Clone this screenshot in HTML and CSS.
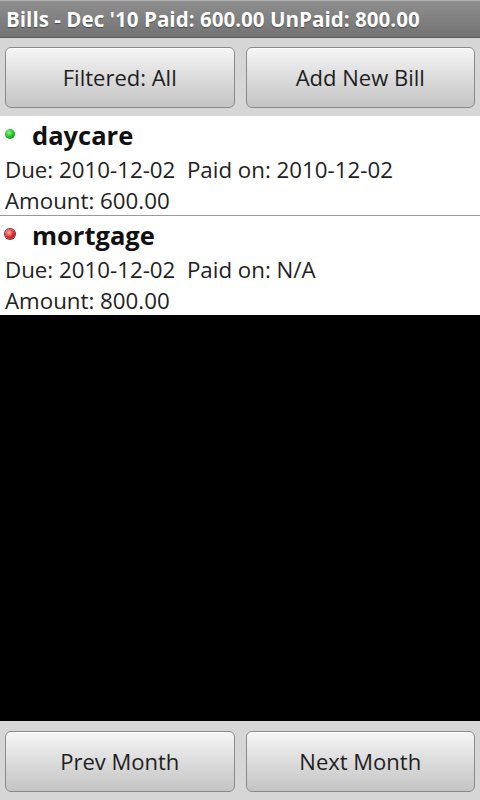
FILE: index.html
```html
<!DOCTYPE html>
<html>
<head>
<meta charset="utf-8">
<link rel="stylesheet" href="styles.css">
</head>
<body>
<div class="screen">
  <div class="titlebar">Bills - Dec '10 Paid: 600.00 UnPaid: 800.00</div>
  <div class="toolbar">
    <div class="btn">Filtered: All</div>
    <div class="btn">Add New Bill</div>
  </div>
  <div class="list">
    <div class="item">
      <div class="name"><span class="dot green"></span>daycare</div>
      <div class="line">Due: 2010-12-02&nbsp;&nbsp;Paid on: 2010-12-02</div>
      <div class="line">Amount: 600.00</div>
    </div>
    <div class="item">
      <div class="name"><span class="dot red"></span>mortgage</div>
      <div class="line">Due: 2010-12-02&nbsp;&nbsp;Paid on: N/A</div>
      <div class="line">Amount: 800.00</div>
    </div>
  </div>
  <div class="empty"></div>
  <div class="toolbar bottom">
    <div class="btn">Prev Month</div>
    <div class="btn">Next Month</div>
  </div>
</div>
</body>
</html>
```
FILE: styles.css
```css
html, body {
  margin: 0;
  padding: 0;
  background: #000;
}
.screen {
  width: 480px;
  height: 800px;
  display: flex;
  flex-direction: column;
  font-family: "Open Sans", "Noto Sans", sans-serif;
  overflow: hidden;
}
.titlebar {
  height: 38px;
  box-sizing: border-box;
  background: linear-gradient(#8e8e8e, #737373);
  border-top: 1px solid #b0b0b0;
  border-bottom: 1px solid #5a5a5a;
  color: #fff;
  font-weight: bold;
  font-size: 20.6px;
  line-height: 36px;
  padding-left: 6px;
  white-space: nowrap;
  text-shadow: 0 1px 1px rgba(0,0,0,0.4);
}
.toolbar {
  background: #d6d6d6;
  display: flex;
  gap: 11px;
  padding: 9px 5px 8px 5px;
}
.toolbar.bottom {
  padding: 10px 5px 8px 5px;
}
.btn {
  flex: 1;
  height: 61px;
  box-sizing: border-box;
  border: 1px solid #8a8a8a;
  border-radius: 6px;
  background: linear-gradient(#f6f6f6, #dcdcdc 50%, #c4c4c4);
  box-shadow: inset 0 1px 0 #fff;
  color: #1e1e1e;
  font-size: 22px;
  padding-bottom: 2px;
  display: flex;
  align-items: center;
  justify-content: center;
}
.list {
  background: #fff;
}
.item {
  height: 99px;
  box-sizing: border-box;
  padding-left: 5px;
  color: #222;
}
.item + .item {
  border-top: 1px solid #999;
  height: 100px;
}
.name {
  display: flex;
  align-items: center;
  font-weight: bold;
  font-size: 25.5px;
  height: 38px;
  color: #111;
}
.dot {
  width: 10px;
  height: 10px;
  border-radius: 50%;
  margin: 0 17px 3px 0;
  flex: none;
}
.dot.green {
  background: radial-gradient(circle at 40% 35%, #8cf58c, #19b819 55%, #0b7a0b);
}
.dot.red {
  background: radial-gradient(circle at 40% 35%, #ffb0b0, #e02020 55%, #8a1010);
  box-shadow: 0 0 0 1px #7a3030;
}
.line {
  font-size: 22.3px;
  line-height: 31px;
}
.empty {
  flex: 1;
  background: #000;
}
```
